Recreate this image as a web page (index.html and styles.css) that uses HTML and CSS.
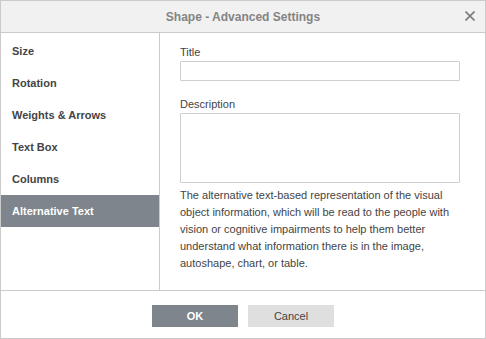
FILE: index.html
```html
<!DOCTYPE html>
<html>
<head>
<meta charset="utf-8">
<link rel="stylesheet" href="styles.css">
</head>
<body>
<div class="dialog">
  <div class="header">
    <span class="title">Shape - Advanced Settings</span>
    <span class="close">
      <svg width="10" height="10" viewBox="0 0 10 10"><path d="M0.5 0.5 L9.5 9.5 M9.5 0.5 L0.5 9.5" stroke="#7a7a7a" stroke-width="1.6" fill="none"/></svg>
    </span>
  </div>
  <div class="body">
    <div class="menu">
      <div class="item">Size</div>
      <div class="item">Rotation</div>
      <div class="item">Weights &amp; Arrows</div>
      <div class="item">Text Box</div>
      <div class="item">Columns</div>
      <div class="item active">Alternative Text</div>
    </div>
    <div class="content">
      <div class="label">Title</div>
      <div class="input"></div>
      <div class="label desc">Description</div>
      <div class="textarea"></div>
      <p class="note">The alternative text-based representation of the visual object information, which will be read to the people with vision or cognitive impairments to help them better understand what information there is in the image, autoshape, chart, or table.</p>
    </div>
  </div>
  <div class="footer">
    <div class="btn ok">OK</div>
    <div class="btn cancel">Cancel</div>
  </div>
</div>
</body>
</html>
```
FILE: styles.css
```css
html, body {
  margin: 0;
  padding: 0;
  background: #fff;
}
.dialog {
  width: 486px;
  height: 339px;
  box-sizing: border-box;
  border: 1px solid #cbcbcb;
  display: flex;
  flex-direction: column;
  font-family: "Liberation Sans", Arial, sans-serif;
  color: #444;
  font-size: 11px;
}
.header {
  height: 31px;
  border-bottom: 1px solid #cbcbcb;
  background: #f1f1f1;
  position: relative;
  display: flex;
  align-items: center;
  justify-content: center;
}
.title {
  font-size: 12px;
  font-weight: bold;
  color: #848484;
}
.close {
  position: absolute;
  right: 10px;
  top: 10px;
  width: 10px;
  height: 10px;
  display: block;
}
.close svg { display: block; }
.body {
  height: 257px;
  display: flex;
  border-bottom: 1px solid #cbcbcb;
}
.menu {
  width: 158px;
  border-right: 1px solid #cbcbcb;
  padding-top: 2px;
}
.item {
  height: 32px;
  line-height: 32px;
  padding-left: 11px;
  font-weight: bold;
  color: #444;
}
.item.active {
  background: #7e858c;
  color: #fff;
}
.content {
  flex: 1;
  padding: 12px 25px 0 20px;
}
.label {
  line-height: 14px;
  margin-bottom: 2px;
}
.label.desc {
  margin-top: 16px;
}
.input {
  height: 20px;
  box-sizing: border-box;
  border: 1px solid #cfcfcf;
  border-radius: 1px;
}
.textarea {
  height: 70px;
  box-sizing: border-box;
  border: 1px solid #cfcfcf;
  border-radius: 1px;
}
.note {
  margin: 4px 0 0 0;
  line-height: 17px;
}
.footer {
  flex: 1;
  display: flex;
  justify-content: center;
  align-items: flex-start;
  gap: 10px;
  padding-top: 14px;
}
.btn {
  width: 86px;
  height: 22px;
  line-height: 22px;
  text-align: center;
  font-size: 11px;
}
.ok {
  background: #7e858c;
  color: #fff;
  font-weight: bold;
}
.cancel {
  background: #dfdfdf;
  color: #444;
}
```
